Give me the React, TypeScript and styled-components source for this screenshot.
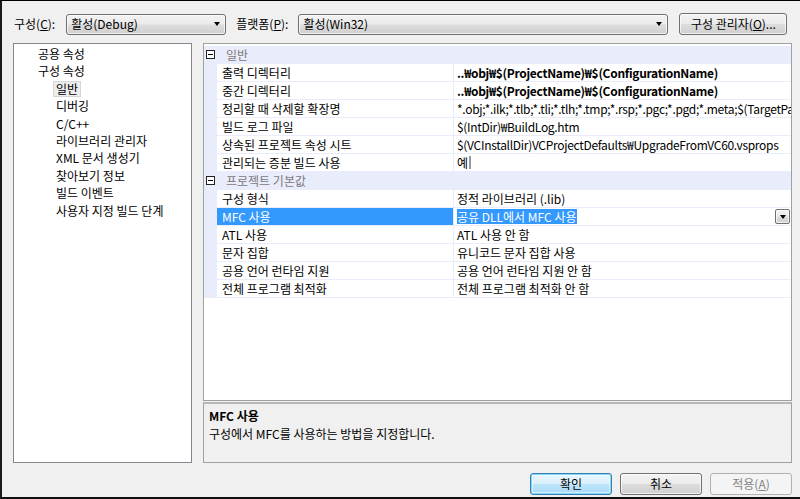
import React from "react";
import styled, { createGlobalStyle, css } from "styled-components";

const GlobalStyle = createGlobalStyle`
  html, body {
    margin: 0;
    padding: 0;
    background: #f0f0f0;
  }
  body {
    font-family: "Noto Sans CJK KR", "Noto Sans", sans-serif;
    font-size: 12px;
    color: #000;
  }
`;

const Dialog = styled.div`
  box-sizing: border-box;
  width: 800px;
  height: 499px;
  background: #f0f0f0;
  border-top: 1px solid #000;
  border-left: 2px solid #1a1a1a;
  border-bottom: 2px solid #111;
  padding: 12px 8px 0 11px;
  display: flex;
  flex-direction: column;
  overflow: hidden;
`;

const TopBar = styled.div`
  display: flex;
  align-items: center;
  height: 22px;
`;

const Label = styled.span<{ $left?: number }>`
  margin-left: ${(p) => p.$left ?? 0}px;
  white-space: nowrap;
  line-height: 16px;
`;

const Mnemonic = styled.span`
  text-decoration: underline;
`;

const chrome = css`
  box-sizing: border-box;
  border: 1px solid #707070;
  border-radius: 3px;
  background: linear-gradient(#f2f2f2 0%, #ebebeb 48%, #dddddd 52%, #cfcfcf 100%);
  box-shadow: inset 0 0 0 1px rgba(255, 255, 255, 0.7);
`;

const Combo = styled.div<{ $width: number; $left: number }>`
  ${chrome};
  width: ${(p) => p.$width}px;
  height: 21px;
  margin-left: ${(p) => p.$left}px;
  display: flex;
  align-items: center;
  justify-content: space-between;
  padding: 0 5px 0 4px;
  line-height: 16px;
  flex: none;
`;

const Arrow = styled.span`
  width: 0;
  height: 0;
  border-left: 3.5px solid transparent;
  border-right: 3.5px solid transparent;
  border-top: 4px solid #000;
`;

const Button = styled.div<{ $width?: number; $left?: number; $variant?: "default" | "disabled" }>`
  ${chrome};
  width: ${(p) => p.$width ?? 82}px;
  height: 22px;
  margin-left: ${(p) => p.$left ?? 0}px;
  display: flex;
  align-items: center;
  justify-content: center;
  line-height: 16px;
  flex: none;
  ${(p) =>
    p.$variant === "default" &&
    css`
      border-color: #3c7fb1;
      box-shadow: inset 0 0 0 1px #7ad9f8, inset 0 0 0 2px rgba(255, 255, 255, 0.5);
      background: linear-gradient(#eaf6fd 0%, #d9f0fc 48%, #bee6fd 52%, #a7d9f5 100%);
    `}
  ${(p) =>
    p.$variant === "disabled" &&
    css`
      border-color: #adb2b5;
      background: #f4f4f4;
      box-shadow: none;
      color: #838383;
    `}
`;

const Main = styled.div`
  display: flex;
  margin-top: 8px;
  height: 420px;
  gap: 11px;
`;

const Tree = styled.div`
  box-sizing: border-box;
  width: 179px;
  flex: none;
  background: #fff;
  border: 1px solid #828790;
  padding-top: 1px;
`;

const TreeItem = styled.div<{ $level: number }>`
  height: 17.4px;
  line-height: 17.4px;
  padding-left: ${(p) => (p.$level === 1 ? 24 : 42)}px;
  white-space: nowrap;
`;

const TreeSelected = styled.span`
  background: #ededed;
  border: 1px solid #d5d5d5;
  padding: 0 2px;
  margin-left: -3px;
  line-height: 14px;
  display: inline-block;
`;

const RightColumn = styled.div`
  flex: 1;
  min-width: 0;
  display: flex;
  flex-direction: column;
  gap: 1px;
`;

const Grid = styled.div`
  box-sizing: border-box;
  height: 358px;
  background: #fff;
  border: 1px solid #a0a0a0;
  padding-top: 2px;
  display: flex;
  flex-direction: column;
  overflow: hidden;
`;

const Row = styled.div`
  display: flex;
  height: 17px;
  border-bottom: 1px solid #e9ecfa;
  line-height: 17px;
`;

const CategoryRow = styled(Row)`
  background: #e9ecfa;
  color: #7a7a7a;
  align-items: center;
`;

const Gutter = styled.div`
  width: 13px;
  flex: none;
  background: #e9ecfa;
`;

const ToggleBox = styled.span`
  box-sizing: border-box;
  width: 9px;
  height: 9px;
  flex: none;
  border: 1px solid #222;
  background: #fff;
  position: relative;
  margin-left: 2px;
  &::after {
    content: "";
    position: absolute;
    left: 1px;
    right: 1px;
    top: 3px;
    height: 1px;
    background: #000;
  }
`;

const CategoryText = styled.span`
  padding-left: 11px;
`;

const NameCell = styled.div<{ $selected?: boolean }>`
  box-sizing: border-box;
  width: 237px;
  flex: none;
  padding-left: 5px;
  border-right: 1px solid #e9ecfa;
  white-space: nowrap;
  overflow: hidden;
  ${(p) =>
    p.$selected &&
    css`
      background: #3399ff;
      color: #fff;
    `}
`;

const ValueCell = styled.div<{ $bold?: boolean; $tight?: boolean }>`
  flex: 1;
  min-width: 0;
  padding-left: 3px;
  white-space: nowrap;
  overflow: hidden;
  display: flex;
  align-items: center;
  font-weight: ${(p) => (p.$bold ? 700 : 400)};
  letter-spacing: ${(p) => (p.$tight ? "-0.3px" : "normal")};
`;

const Highlight = styled.span`
  background: #3399ff;
  color: #fff;
  line-height: 15px;
`;

const DropButton = styled.span`
  ${chrome};
  margin-left: auto;
  margin-right: 1px;
  width: 15px;
  height: 15px;
  border-radius: 2px;
  display: flex;
  align-items: center;
  justify-content: center;
  flex: none;
`;

const Caret = styled.span`
  width: 2px;
  height: 13px;
  margin-left: 1px;
  background: #9a9a9a;
`;

const Description = styled.div`
  box-sizing: border-box;
  flex: 1;
  border: 1px solid #a0a0a0;
  border-top: 2px solid #b8b8b8;
  padding: 3px 5px;
  line-height: 18px;
`;

const DescTitle = styled.div`
  font-weight: 700;
`;

const Footer = styled.div`
  display: flex;
  justify-content: flex-end;
  margin-top: 10px;
`;

type Prop = {
  name: string;
  value: string;
  bold?: boolean;
  tight?: boolean;
  selected?: boolean;
  caret?: boolean;
};

const general: Prop[] = [
  { name: "출력 디렉터리", value: "..₩obj₩$(ProjectName)₩$(ConfigurationName)", bold: true, tight: true },
  { name: "중간 디렉터리", value: "..₩obj₩$(ProjectName)₩$(ConfigurationName)", bold: true, tight: true },
  {
    name: "정리할 때 삭제할 확장명",
    value: "*.obj;*.ilk;*.tlb;*.tli;*.tlh;*.tmp;*.rsp;*.pgc;*.pgd;*.meta;$(TargetPath)",
    tight: true,
  },
  { name: "빌드 로그 파일", value: "$(IntDir)₩BuildLog.htm", tight: true },
  {
    name: "상속된 프로젝트 속성 시트",
    value: "$(VCInstallDir)VCProjectDefaults₩UpgradeFromVC60.vsprops",
    tight: true,
  },
  { name: "관리되는 증분 빌드 사용", value: "예", caret: true },
];

const defaults: Prop[] = [
  { name: "구성 형식", value: "정적 라이브러리 (.lib)" },
  { name: "MFC 사용", value: "공유 DLL에서 MFC 사용", selected: true },
  { name: "ATL 사용", value: "ATL 사용 안 함" },
  { name: "문자 집합", value: "유니코드 문자 집합 사용" },
  { name: "공용 언어 런타임 지원", value: "공용 언어 런타임 지원 안 함" },
  { name: "전체 프로그램 최적화", value: "전체 프로그램 최적화 안 함" },
];

const treeItems = ["디버깅", "C/C++", "라이브러리 관리자", "XML 문서 생성기", "찾아보기 정보", "빌드 이벤트", "사용자 지정 빌드 단계"];

const Category = ({ title }: { title: string }) => (
  <CategoryRow>
    <ToggleBox />
    <CategoryText>{title}</CategoryText>
  </CategoryRow>
);

const PropRow = ({ p }: { p: Prop }) => (
  <Row>
    <Gutter />
    <NameCell $selected={p.selected}>{p.name}</NameCell>
    <ValueCell $bold={p.bold} $tight={p.tight}>
      {p.selected ? <Highlight>{p.value}</Highlight> : p.value}
      {p.caret && <Caret />}
      {p.selected && (
        <DropButton>
          <Arrow />
        </DropButton>
      )}
    </ValueCell>
  </Row>
);

export default function App() {
  return (
    <>
      <GlobalStyle />
      <Dialog>
        <TopBar>
          <Label $left={1}>
            구성(<Mnemonic>C</Mnemonic>):
          </Label>
          <Combo $width={160} $left={11}>
            <span>활성(Debug)</span>
            <Arrow />
          </Combo>
          <Label $left={10}>
            플랫폼(<Mnemonic>P</Mnemonic>):
          </Label>
          <Combo $width={370} $left={10}>
            <span>활성(Win32)</span>
            <Arrow />
          </Combo>
          <Button $width={108} $left={11}>
            구성 관리자(<Mnemonic>O</Mnemonic>)...
          </Button>
        </TopBar>
        <Main>
          <Tree>
            <TreeItem $level={1}>공용 속성</TreeItem>
            <TreeItem $level={1}>구성 속성</TreeItem>
            <TreeItem $level={2}>
              <TreeSelected>일반</TreeSelected>
            </TreeItem>
            {treeItems.map((t) => (
              <TreeItem key={t} $level={2}>
                {t}
              </TreeItem>
            ))}
          </Tree>
          <RightColumn>
            <Grid>
              <Category title="일반" />
              {general.map((p) => (
                <PropRow key={p.name} p={p} />
              ))}
              <Category title="프로젝트 기본값" />
              {defaults.map((p) => (
                <PropRow key={p.name} p={p} />
              ))}
            </Grid>
            <Description>
              <DescTitle>MFC 사용</DescTitle>
              <div>구성에서 MFC를 사용하는 방법을 지정합니다.</div>
            </Description>
          </RightColumn>
        </Main>
        <Footer>
          <Button $variant="default">확인</Button>
          <Button $left={8}>취소</Button>
          <Button $left={8} $variant="disabled">
            적용(<Mnemonic>A</Mnemonic>)
          </Button>
        </Footer>
      </Dialog>
    </>
  );
}
